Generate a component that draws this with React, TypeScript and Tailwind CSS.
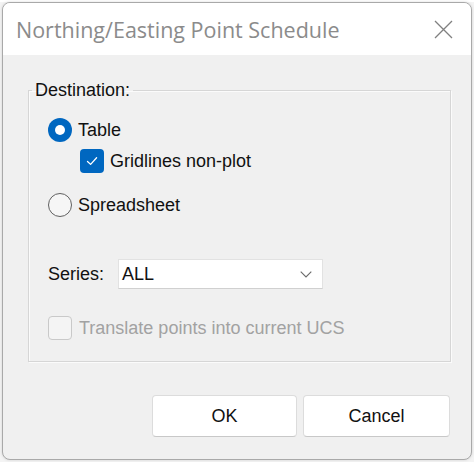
import React from "react";

const body = { fontFamily: '"Liberation Sans", Arial, sans-serif' };
const title = { fontFamily: '"Open Sans", "Noto Sans", sans-serif' };

function Radio({ checked }: { checked?: boolean }) {
  return checked ? (
    <span className="grid h-[24px] w-[24px] shrink-0 place-items-center rounded-full bg-[#0067c0]">
      <span className="h-[10px] w-[10px] rounded-full bg-white" />
    </span>
  ) : (
    <span className="h-[24px] w-[24px] shrink-0 rounded-full border-[1.5px] border-[#606060] bg-[#f6f6f6]" />
  );
}

function Check({ checked, disabled }: { checked?: boolean; disabled?: boolean }) {
  if (checked)
    return (
      <span className="grid h-[24px] w-[24px] shrink-0 place-items-center rounded-[4px] bg-[#0067c0]">
        <svg width="14" height="12" viewBox="0 0 14 12" fill="none">
          <path d="M2.5 6.5 L5.6 9.4 L11.6 2.8" stroke="#fff" strokeWidth="1.3" strokeLinecap="round" strokeLinejoin="round" />
        </svg>
      </span>
    );
  return (
    <span
      className={
        disabled
          ? "h-[24px] w-[24px] shrink-0 rounded-[4px] border border-[#c9c9c9] bg-[#f4f4f4]"
          : "h-[24px] w-[24px] shrink-0 rounded-[4px] border border-[#606060] bg-white"
      }
    />
  );
}

export default function App() {
  return (
    <div className="h-[462px] w-[474px] bg-[#f4f4f4]" style={body}>
      <div className="m-[2px] flex h-[458px] w-[470px] flex-col overflow-hidden rounded-[8px] border border-[#a9a9a9] bg-[#f0f0f0] shadow-[0_0_3px_rgba(0,0,0,0.15)]">
        {/* title bar */}
        <div className="flex h-[52px] shrink-0 items-center justify-between bg-white pl-[13px] pr-[18px]">
          <span className="pt-[1px] text-[21.5px] leading-none text-[#8b8b8b]" style={title}>
            Northing/Easting Point Schedule
          </span>
          <svg width="19" height="19" viewBox="0 0 19 19" fill="none">
            <path d="M1 1 L18 18 M18 1 L1 18" stroke="#808080" strokeWidth="1.3" />
          </svg>
        </div>

        {/* group */}
        <fieldset className="ml-[25px] mt-[25px] w-[423px] border border-[#d6d6d6] shadow-[1px_1px_0_#fbfbfb,inset_1px_1px_0_#fbfbfb] text-[18px] text-[#111]">
          <legend className="ml-[3px] px-[3px] leading-[20px]">Destination:</legend>

          <div className="pb-[21px] pl-[19px]">
            <div className="mt-[18px] flex h-[24px] items-center gap-[6px]">
              <Radio checked />
              <span>Table</span>
            </div>
            <div className="ml-[32px] mt-[7px] flex h-[24px] items-center gap-[6px]">
              <Check checked />
              <span>Gridlines non-plot</span>
            </div>
            <div className="mt-[20px] flex h-[24px] items-center gap-[6px]">
              <Radio />
              <span>Spreadsheet</span>
            </div>

            <div className="mt-[42px] flex h-[30px] items-center">
              <span className="w-[70px]">Series:</span>
              <div className="flex h-[30px] w-[205px] items-center justify-between border border-[#e2e2e2] border-b-[#d0d0d0] bg-white pl-[3px] pr-[10px]">
                <span>ALL</span>
                <svg width="12" height="7" viewBox="0 0 12 7" fill="none">
                  <path d="M0.7 0.7 L6 6 L11.3 0.7" stroke="#6a6a6a" strokeWidth="1.1" />
                </svg>
              </div>
            </div>

            <div className="mt-[27px] flex h-[24px] items-center gap-[7px] text-[#a2a2a2]">
              <Check disabled />
              <span>Translate points into current UCS</span>
            </div>
          </div>
        </fieldset>

        {/* buttons */}
        <div className="mt-[33px] flex justify-end gap-[6px] pr-[21px] text-[18px] text-[#111]">
          <button className="h-[42px] w-[145px] rounded-[4px] border border-[#dcdcdc] border-b-[#c8c8c8] bg-white">OK</button>
          <button className="h-[42px] w-[147px] rounded-[4px] border border-[#dcdcdc] border-b-[#c8c8c8] bg-white">Cancel</button>
        </div>
      </div>
    </div>
  );
}
